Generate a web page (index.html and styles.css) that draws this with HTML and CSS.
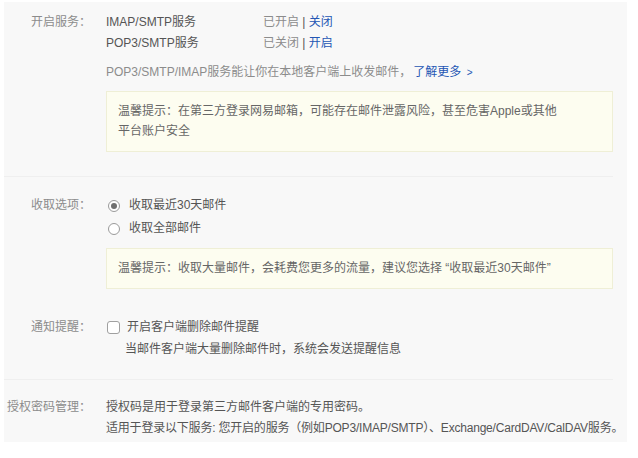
FILE: index.html
```html
<!DOCTYPE html>
<html lang="zh-CN">
<head>
<meta charset="utf-8">
<title>客户端设置</title>
<link rel="stylesheet" href="styles.css">
</head>
<body>
<div class="panel">
  <section class="sec sec-service">
    <div class="label">开启服务：</div>
    <div class="content">
      <div class="svc-row"><span class="svc-name">IMAP/SMTP服务</span><span class="svc-status">已开启 <span class="pipe">|</span> <a class="link">关闭</a></span></div>
      <div class="svc-row"><span class="svc-name">POP3/SMTP服务</span><span class="svc-status">已关闭 <span class="pipe">|</span> <a class="link">开启</a></span></div>
      <div class="desc">POP3/SMTP/IMAP服务能让你在本地客户端上收发邮件，<a class="link more">了解更多 <span class="chev">&gt;</span></a></div>
      <div class="tip tip-1">温馨提示：在第三方登录网易邮箱，可能存在邮件泄露风险，甚至危害Apple或其他<br>平台账户安全</div>
    </div>
  </section>
  <section class="sec sec-fetch">
    <div class="label">收取选项：</div>
    <div class="content">
      <div class="opt"><span class="radio checked"></span><span>收取最近30天邮件</span></div>
      <div class="opt"><span class="radio"></span><span>收取全部邮件</span></div>
      <div class="tip tip-2">温馨提示：收取大量邮件，会耗费您更多的流量，建议您选择 “收取最近30天邮件”</div>
    </div>
  </section>
  <section class="sec sec-notify">
    <div class="label">通知提醒：</div>
    <div class="content">
      <div class="opt chk-row"><span class="checkbox"></span><span>开启客户端删除邮件提醒</span></div>
      <div class="sub">当邮件客户端大量删除邮件时，系统会发送提醒信息</div>
    </div>
  </section>
  <section class="sec sec-auth">
    <div class="label">授权密码管理：</div>
    <div class="content">
      <div class="line">授权码是用于登录第三方邮件客户端的专用密码。</div>
      <div class="line nowrap tight">适用于登录以下服务: 您开启的服务（例如POP3/IMAP/SMTP）、Exchange/CardDAV/CalDAV服务。</div>
    </div>
  </section>
</div>
</body>
</html>
```

FILE: styles.css
```css
html, body {
  margin: 0;
  padding: 0;
  background: #ffffff;
}
body {
  font-family: "Liberation Sans", "Noto Sans CJK SC", sans-serif;
  font-size: 12px;
  color: #555;
}
.panel {
  margin: 2px 0 0 4px;
  width: 623px;
  height: 440px;
  background: #f8f8f8;
  box-sizing: border-box;
  padding-right: 14px;
}
.sec {
  display: grid;
  grid-template-columns: 87px 1fr;
  column-gap: 15px;
  align-items: start;
}
.label {
  text-align: right;
  color: #8c8c8c;
  white-space: nowrap;
}
.sec-service {
  padding-top: 10px;
  padding-bottom: 24px;
  border-bottom: 1px solid #efefef;
}
.sec-service .label { line-height: 21px; }
.svc-row {
  display: flex;
  line-height: 21px;
}
.svc-name {
  width: 157px;
  color: #555;
}
.svc-status { color: #8c8c8c; }
.pipe { color: #555; }
.link {
  color: #2456b4;
  text-decoration: none;
  cursor: pointer;
}
.desc {
  margin-top: 8px;
  line-height: 20px;
  color: #8c8c8c;
}
.more { margin-left: 2px; }
.chev {
  font-size: 10px;
  margin-left: 2px;
}
.tip {
  margin-top: 8px;
  background: #fdfdf0;
  border: 1px solid #efefd6;
  padding: 9px 11px 10px;
  line-height: 20px;
  color: #666;
}
.sec-fetch {
  padding-top: 17px;
  padding-bottom: 14px;
}
.sec-fetch .label { line-height: 23px; }
.opt {
  display: flex;
  align-items: center;
  line-height: 23px;
  color: #555;
}
.radio {
  width: 12px;
  height: 12px;
  box-sizing: border-box;
  border: 1px solid #9a9a9a;
  border-radius: 50%;
  background: #fff;
  margin: 0 9px 0 2px;
  position: relative;
}
.radio.checked::after {
  content: "";
  position: absolute;
  left: 2px;
  top: 2px;
  width: 6px;
  height: 6px;
  border-radius: 50%;
  background: #707070;
}
.tip-2 { margin-top: 8px; }
.sec-notify {
  padding-top: 13px;
  padding-bottom: 19px;
  border-bottom: 1px solid #efefef;
}
.sec-notify .label { line-height: 22px; }
.chk-row { line-height: 22px; }
.checkbox {
  width: 13px;
  height: 13px;
  box-sizing: border-box;
  border: 1px solid #a0a0a0;
  border-radius: 3px;
  background: #fff;
  margin: 0 7px 0 1px;
}
.sub {
  line-height: 22px;
  padding-left: 19px;
  color: #555;
}
.sec-auth {
  padding-top: 17px;
}
.sec-auth .label { line-height: 21px; }
.line {
  line-height: 21px;
  color: #555;
}
.nowrap { white-space: nowrap; }
.tight { letter-spacing: -0.2px; }
```
